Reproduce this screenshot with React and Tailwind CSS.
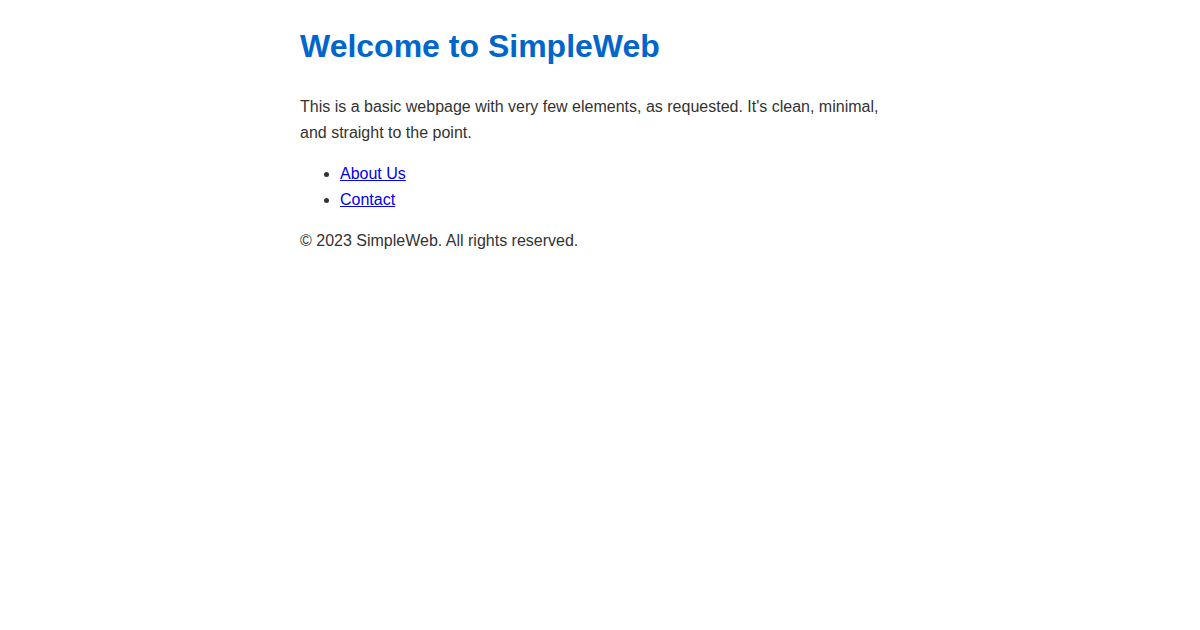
export default function App() {
  return (
    <div className="min-h-screen bg-white" style={{}}>
      <div className="mx-auto max-w-[600px] font-['Liberation_Sans',Arial,sans-serif] text-[16px] leading-[1.6] text-[#333333]">
        <h1 className="pt-[21.44px] pb-[21.44px] text-[32px] font-bold text-[#0066cc]">Welcome to SimpleWeb</h1>
        <p className="mb-4">
          This is a basic webpage with very few elements, as requested. It's clean, minimal, and straight to the point.
        </p>
        <ul className="mb-4 list-disc pl-10">
          <li>
            <a href="#" className="text-[#0000ee] underline">About Us</a>
          </li>
          <li>
            <a href="#" className="text-[#0000ee] underline">Contact</a>
          </li>
        </ul>
        <p>© 2023 SimpleWeb. All rights reserved.</p>
      </div>
    </div>
  );
}
